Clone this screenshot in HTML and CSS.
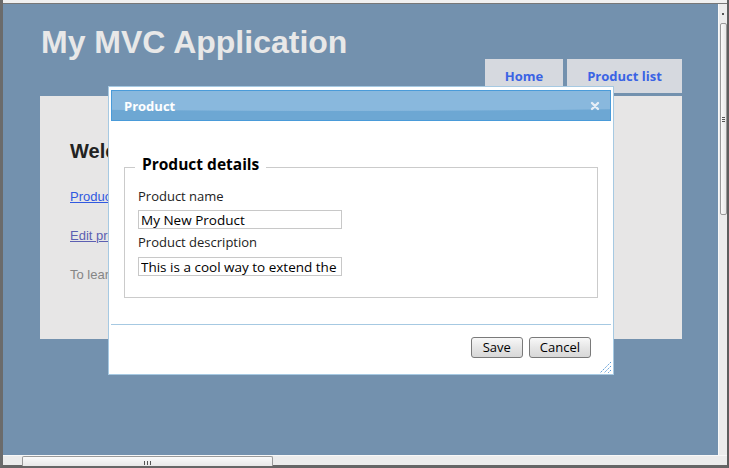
FILE: index.html
```html
<!DOCTYPE html>
<html lang="en">
<head>
    <meta charset="UTF-8">
    <title>My MVC Application</title>
    <link rel="stylesheet" href="styles.css">
</head>
<body>
    <div class="window">
        <div class="frame">
            <div class="page">
                <div class="container">
                    <h1 class="site-title">My MVC Application</h1>
                    <ul class="menu">
                        <li><a href="#">Home</a></li>
                        <li><a href="#">Product list</a></li>
                    </ul>
                    <div class="main">
                        <h2>Welcome!</h2>
                        <p><a href="#">Product list</a></p>
                        <p><a href="#" class="visited">Edit product</a></p>
                        <p class="muted">To learn more</p>
                    </div>
                </div>

                <!-- modal dialog -->
                <div class="dialog">
                    <div class="dialog-titlebar">
                        <span class="dialog-title">Product</span>
                        <svg class="dialog-close" width="10" height="10" viewBox="0 0 10 10">
                            <path d="M2 2 L8 8 M8 2 L2 8" stroke="#e6eef6" stroke-width="2.4" stroke-linecap="round"/>
                        </svg>
                    </div>
                    <div class="dialog-content">
                        <fieldset>
                            <legend>Product details</legend>
                            <label for="productName">Product name</label>
                            <input type="text" id="productName" value="My New Product">
                            <label for="productDescription">Product description</label>
                            <input type="text" id="productDescription" value="This is a cool way to extend the ASP.NET MVC framework">
                        </fieldset>
                    </div>
                    <div class="dialog-buttons">
                        <button>Save</button>
                        <button>Cancel</button>
                    </div>
                    <svg class="dialog-grip" width="12" height="12" viewBox="0 0 12 12">
                        <path d="M12 1 L1 12 M12 5 L5 12 M12 9 L9 12" stroke="#5a9ad6" stroke-width="1" stroke-dasharray="1.5 1"/>
                    </svg>
                </div>
            </div>
            <div class="vscroll">
                <span class="arrow-up"></span>
                <div class="vthumb"><span class="grip-v"></span></div>
            </div>
        </div>
        <div class="hscroll">
            <div class="hthumb"><span class="grip-h"></span></div>
        </div>
    </div>
</body>
</html>
```

FILE: styles.css
```css
body {
    margin: 0;
    background: #fff;
}
.window {
    width: 729px;
    height: 468px;
    box-sizing: border-box;
    display: flex;
    flex-direction: column;
    padding-top: 3px;
    background: #f0f0f0;
    border-left: 3px solid #6b6b6b;
    border-right: 2px solid #5e5e5e;
    border-bottom: 3px solid #666;
}
.frame {
    flex: 1;
    display: flex;
    min-height: 0;
    border-top: 1px solid #777;
}
.page {
    flex: 1;
    position: relative;
    overflow: hidden;
    background: #7391ae;
}
.vscroll {
    width: 9px;
    box-sizing: border-box;
    background: #ececec;
    border-left: 1px solid #f8f8f8;
    display: flex;
    flex-direction: column;
    align-items: center;
    padding-top: 9px;
}
.arrow-up {
    width: 2px;
    height: 2px;
    background: #555;
    margin-bottom: 8px;
}
.vthumb {
    width: 7px;
    height: 192px;
    box-sizing: border-box;
    border: 1px solid #9a9a9a;
    border-radius: 2px;
    background: linear-gradient(to right, #fafafa, #e8e8e8);
    display: flex;
    align-items: center;
    justify-content: center;
}
.grip-v {
    width: 3px;
    height: 5px;
    background: repeating-linear-gradient(#555 0 1px, transparent 1px 2px);
}
.hscroll {
    height: 10px;
    box-sizing: border-box;
    background: #ececec;
    border-top: 1px solid #f8f8f8;
    padding-left: 19px;
    display: flex;
}
.hthumb {
    width: 251px;
    height: 10px;
    box-sizing: border-box;
    border: 1px solid #9a9a9a;
    border-bottom: none;
    border-radius: 2px 2px 0 0;
    background: linear-gradient(#fafafa, #e8e8e8);
    display: flex;
    justify-content: center;
    align-items: flex-end;
}
.grip-h {
    width: 7px;
    height: 4px;
    margin-bottom: 1px;
    background: repeating-linear-gradient(to right, #555 0 1px, transparent 1px 3px);
}

/* site layout */
.container {
    margin-left: 37px;
    width: 642px;
}
.site-title {
    margin: 21px 0 0 1px;
    font-family: "Liberation Sans", Arial, sans-serif;
    font-size: 32px;
    line-height: 34px;
    font-weight: bold;
    color: #e8e8e8;
}
.menu {
    list-style: none;
    margin: 0;
    padding: 0;
    display: flex;
    justify-content: flex-end;
    gap: 4px;
}
.menu li a {
    display: block;
    height: 34px;
    line-height: 34px;
    text-align: center;
    background: #d6d9df;
    color: #3a63e4;
    font-family: "Open Sans", sans-serif;
    font-weight: bold;
    font-size: 13px;
    text-decoration: none;
}
.menu li:first-child a {
    width: 78px;
}
.menu li:last-child a {
    width: 115px;
}
.main {
    margin-top: 3px;
    height: 243px;
    box-sizing: border-box;
    background: #e7e6e6;
    padding: 43px 30px 0;
    font-family: "Liberation Sans", Arial, sans-serif;
}
.main h2 {
    margin: 0 0 26px;
    font-size: 20px;
    line-height: 24px;
    color: #222;
}
.main p {
    margin: 0 0 23px;
    font-size: 13px;
    line-height: 16px;
}
.main a {
    color: #3159e0;
}
.main a.visited {
    color: #5c5fb2;
}
.main .muted {
    color: #858585;
}

/* dialog */
.dialog {
    position: absolute;
    left: 105px;
    top: 82px;
    width: 506px;
    box-sizing: border-box;
    padding: 3px 2px;
    background: #fff;
    border: 1px solid #a6c9e2;
    font-family: "Open Sans", sans-serif;
    font-size: 13px;
    color: #222;
}
.dialog-titlebar {
    position: relative;
    height: 31px;
    box-sizing: border-box;
    border: 1px solid #4a9bd9;
    background: radial-gradient(ellipse 140% 70% at 45% 0%, #89b8dd 0 96%, #6da7d3 100%);
    padding-left: 12px;
}
.dialog-title {
    color: #fff;
    font-weight: bold;
    line-height: 30px;
}
.dialog-close {
    position: absolute;
    right: 10px;
    top: 10px;
}
.dialog-content {
    padding: 33px 13px 26px;
}
fieldset {
    margin: 0;
    padding: 7px 13px 21px;
    border: 1px solid #cbcbcb;
}
legend {
    margin-left: -3px;
    padding: 0 7px 6px 7px;
    font-size: 15.5px;
    line-height: 20px;
    font-weight: bold;
    color: #000;
}
fieldset label {
    display: block;
    line-height: 18px;
    color: #222;
}
fieldset input {
    display: block;
    width: 204px;
    height: 19px;
    box-sizing: border-box;
    margin: 5px 0 4px;
    padding: 0 2px;
    border: 1px solid #c8c8c8;
    font-family: "Open Sans", sans-serif;
    font-size: 13.5px;
    color: #000;
    outline: none;
}
fieldset input:last-child {
    margin: 6px 0 0;
}
.dialog-buttons {
    border-top: 1px solid #a6c9e2;
    padding: 12px 20px 13px;
    display: flex;
    justify-content: flex-end;
    gap: 6px;
}
.dialog-buttons button {
    height: 21px;
    padding: 0 10px;
    border: 1px solid #7a7a7a;
    border-radius: 3px;
    background: linear-gradient(#f8f8f8, #e6e6e6 50%, #d8d8d8);
    font-family: "Open Sans", sans-serif;
    font-size: 13px;
    line-height: 19px;
    color: #000;
}
.dialog-buttons button:first-child {
    padding: 0 11px;
}
.dialog-grip {
    position: absolute;
    right: 2px;
    bottom: 1px;
}
```
